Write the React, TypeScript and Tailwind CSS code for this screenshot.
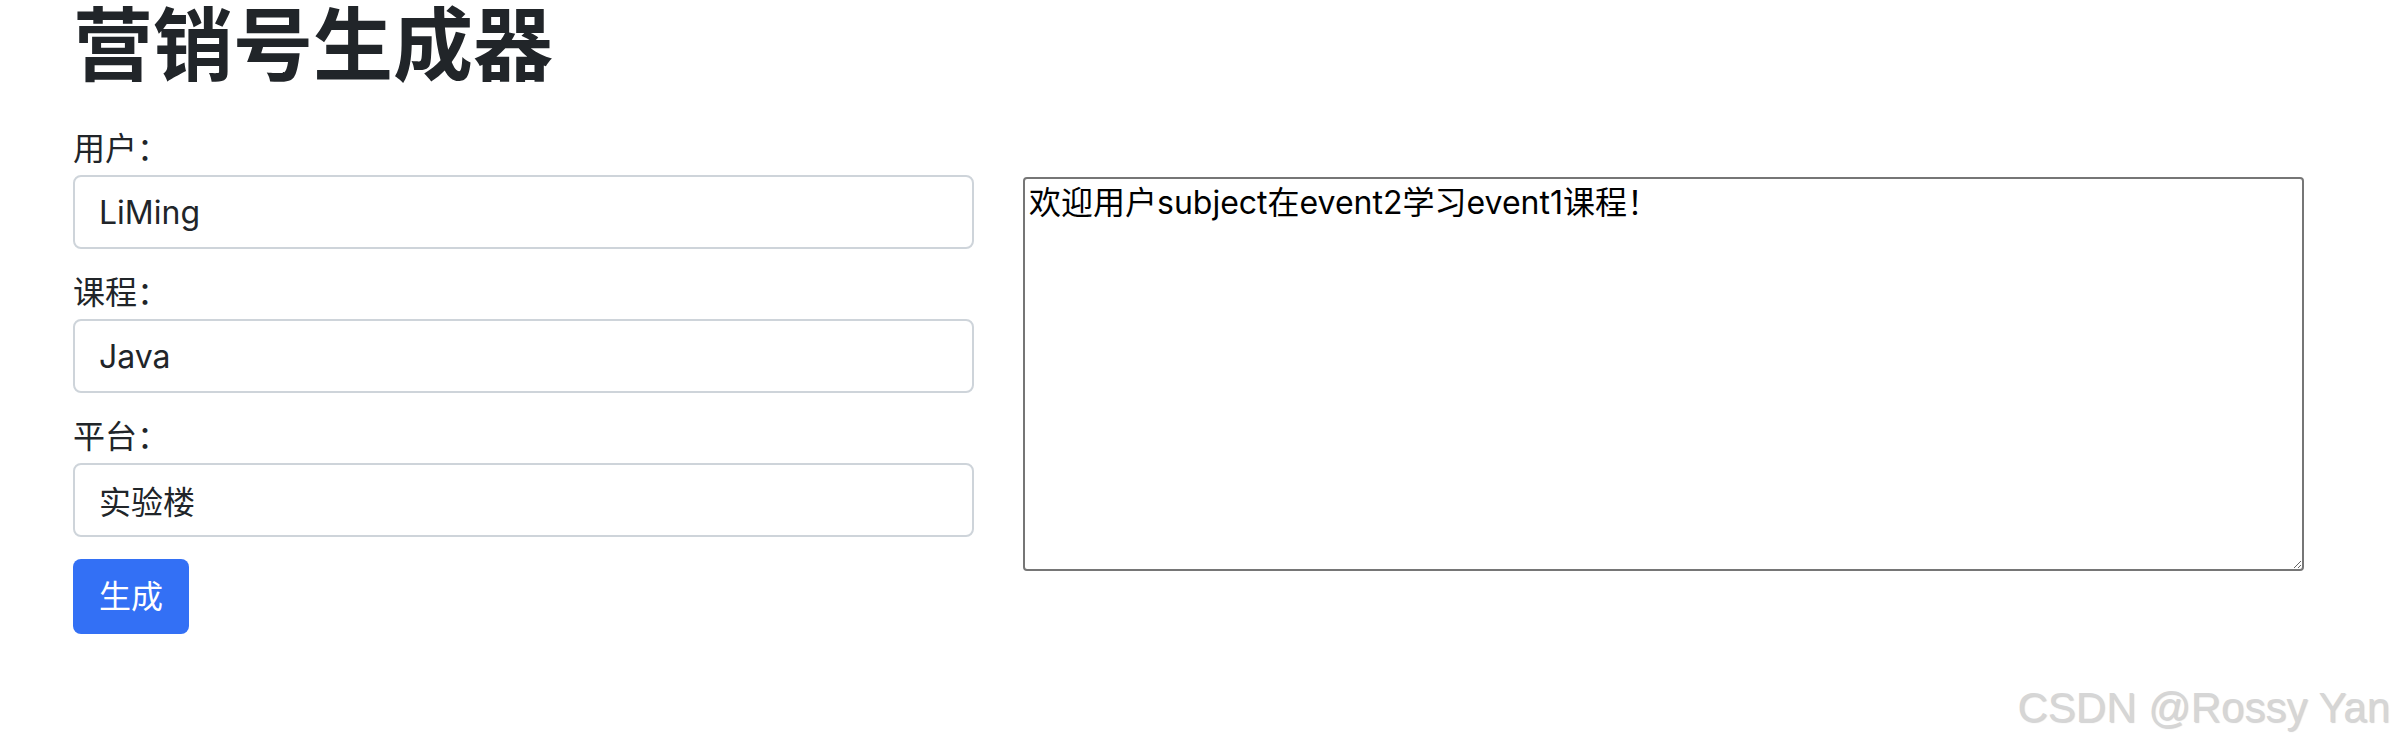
import React, { useState } from 'react';

const fields = [
  { key: 'subject', label: '用户：', value: 'LiMing' },
  { key: 'event1', label: '课程：', value: 'Java' },
  { key: 'event2', label: '平台：', value: '实验楼' },
];

const App: React.FC = () => {
  const [values, setValues] = useState<Record<string, string>>({
    subject: 'LiMing',
    event1: 'Java',
    event2: '实验楼',
  });
  const [result, setResult] = useState('欢迎用户subject在event2学习event1课程！');

  const generate = () => {
    setResult(`欢迎用户${values.subject}在${values.event2}学习${values.event1}课程！`);
  };

  return (
    <div className="relative min-h-screen bg-white px-[73px] font-['Inter','Noto_Sans_CJK_SC',sans-serif] text-[#212529]">
      <h1 className="mt-[-3px] mb-[32px] text-[80px] leading-[96px] font-bold">营销号生成器</h1>

      <div className="flex items-start gap-[49px]">
        {/* Form */}
        <div className="w-[901px] shrink-0">
          {fields.map((field) => (
            <div key={field.key} className="mb-[20px]">
              <label className="mb-[2px] block text-[32px] leading-[48px]">{field.label}</label>
              <input
                className="block h-[74px] w-full rounded-[8px] border-2 border-[#ced4da] bg-white px-[24px] text-[32px] text-[#212529] outline-none"
                value={values[field.key]}
                onChange={(e) => setValues({ ...values, [field.key]: e.target.value })}
              />
            </div>
          ))}
          <button
            onClick={generate}
            className="mt-[2px] h-[75px] w-[116px] rounded-[8px] bg-[#3370f5] text-[32px] text-white"
          >
            生成
          </button>
        </div>

        {/* Output */}
        <textarea
          className="mt-[52px] h-[394px] w-[1281px] rounded-[4px] border-2 border-[#767676] p-[4px] text-[32px] leading-[40px] text-black outline-none"
          value={result}
          onChange={(e) => setResult(e.target.value)}
        />
      </div>

      {/* Watermark */}
      <div className="pointer-events-none absolute right-[6px] bottom-[16px] font-['Liberation_Sans',Arial,sans-serif] text-[42px] leading-none text-[#d6d6d6] [text-shadow:1px_1px_1px_rgba(0,0,0,0.18)]">
        CSDN @Rossy Yan
      </div>
    </div>
  );
};

export default App;
